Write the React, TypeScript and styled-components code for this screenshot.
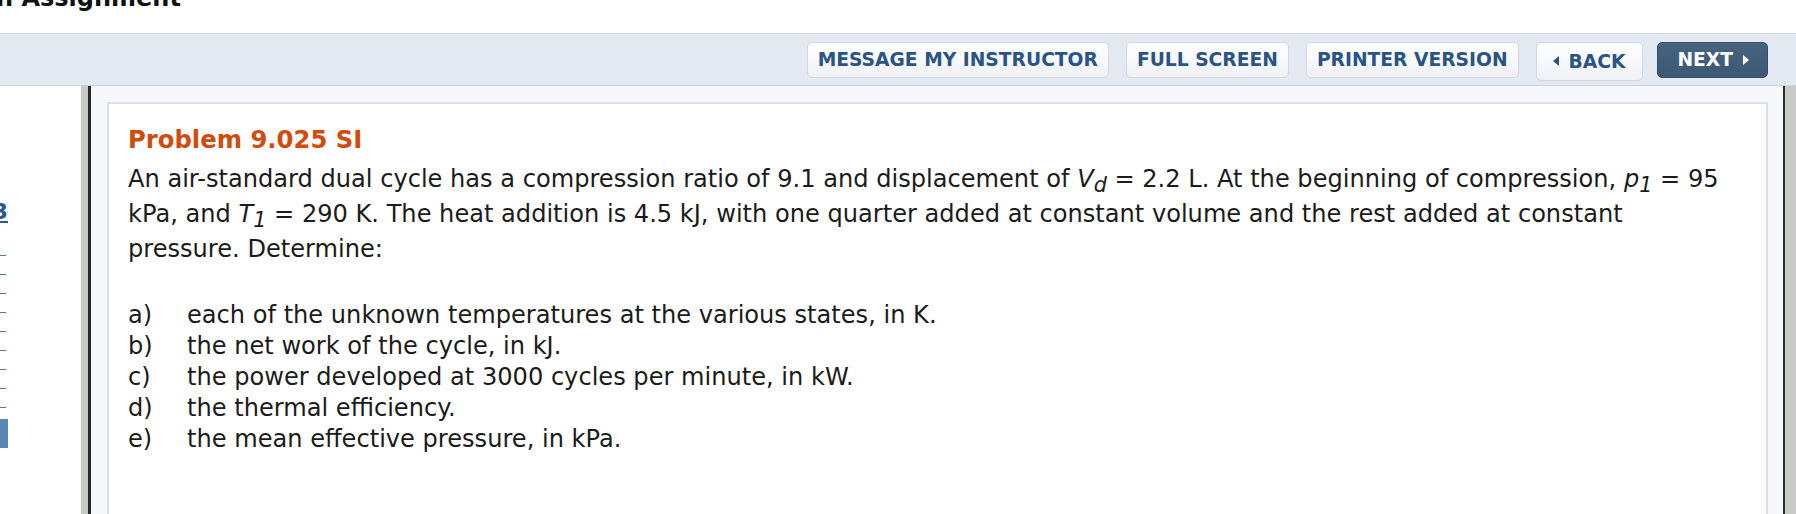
import * as React from "react";
import styled, { createGlobalStyle } from "styled-components";

const GlobalStyle = createGlobalStyle`
  html, body {
    margin: 0;
    padding: 0;
    background: #ffffff;
  }
  body {
    font-family: "DejaVu Sans", Verdana, sans-serif;
    color: #1b1b1b;
  }
`;

const Page = styled.div`
  height: 514px;
  overflow: hidden;
  display: flex;
  flex-direction: column;
`;

const HeadingStrip = styled.div`
  height: 33px;
  overflow: hidden;
  flex-shrink: 0;
`;

const PageTitle = styled.h1`
  margin: -14px 0 0 -4px;
  font-size: 24px;
  line-height: 24px;
  font-weight: bold;
  color: #111;
  white-space: nowrap;
`;

const Toolbar = styled.div`
  height: 51px;
  flex-shrink: 0;
  display: flex;
  align-items: center;
  justify-content: flex-end;
  gap: 17px;
  padding-right: 28px;
  background: #e4e8f0;
  border-top: 1px solid #d2d8e1;
  border-bottom: 1px solid #cbd3de;
`;

const ToolButton = styled.button<{
  $primary?: boolean;
  $tall?: boolean;
  $pad?: string;
}>`
  height: ${(p) => (p.$tall ? "39px" : "36px")};
  margin-top: ${(p) => (p.$tall ? "3px" : "0")};
  margin-left: ${(p) => (p.$primary ? "-3px" : "0")};
  padding: ${(p) => p.$pad ?? "0 10px"};
  display: flex;
  align-items: center;
  gap: 10px;
  font-family: "DejaVu Sans", Verdana, sans-serif;
  font-size: 18.7px;
  font-weight: bold;
  border-radius: 5px;
  cursor: pointer;
  color: ${(p) => (p.$primary ? "#ffffff" : "#2a5386")};
  background: ${(p) =>
    p.$primary
      ? "linear-gradient(#46637f, #3c5874)"
      : "linear-gradient(#ffffff, #eef1f6)"};
  border: 1px solid ${(p) => (p.$primary ? "#34506c" : "#d0d8e2")};
`;

const Arrow = styled.span<{ $dir: "left" | "right" }>`
  width: 0;
  height: 0;
  border-top: 5px solid transparent;
  border-bottom: 5px solid transparent;
  ${(p) =>
    p.$dir === "left"
      ? "border-right: 6px solid currentColor;"
      : "border-left: 6px solid currentColor;"}
`;

const Workspace = styled.div`
  flex: 1;
  display: flex;
  min-height: 0;
`;

const SideNav = styled.nav`
  width: 81px;
  flex-shrink: 0;
  overflow: hidden;
  display: flex;
  flex-direction: column;
  padding-top: 114px;
  box-sizing: border-box;
`;

const NavNumber = styled.a`
  display: block;
  width: 8px;
  overflow: hidden;
  font-size: 22px;
  font-weight: bold;
  line-height: 24px;
  color: #2b5a8a;
  text-decoration: underline;
  direction: rtl;
  white-space: nowrap;
  margin-bottom: 13px;
`;

const NavStub = styled.span`
  display: block;
  height: 19px;
  width: 6px;
  border-bottom: 1px solid #4d7bab;
  box-sizing: border-box;
`;

const NavActive = styled.span`
  display: block;
  margin-top: 11px;
  height: 29px;
  width: 8px;
  background: #5a86b3;
`;

const Splitter = styled.div<{ $side: "left" | "right" }>`
  flex-shrink: 0;
  background: #c9c9c9;
  width: ${(p) => (p.$side === "left" ? "7px" : "11px")};
  ${(p) =>
    p.$side === "left"
      ? "border-right: 3px solid #2a2a2a;"
      : "border-left: 2px solid #2a2a2a;"}
`;

const ContentArea = styled.main`
  flex: 1;
  background: #f5f7fa;
  padding: 16px 15px 0 16px;
  min-width: 0;
  display: flex;
`;

const ProblemPanel = styled.section`
  flex: 1;
  background: #ffffff;
  border: 2px solid #d8dfe8;
  border-bottom: none;
  padding: 21px 40px 0 19px;
`;

const ProblemTitle = styled.h2`
  margin: 0;
  font-size: 24.3px;
  line-height: 30px;
  font-weight: bold;
  color: #d04b0c;
`;

const Statement = styled.p`
  margin: 7px 0 0;
  font-size: 24.1px;
  line-height: 35px;
`;

const Sub = styled.sub`
  font-size: 0.86em;
  line-height: 0;
  vertical-align: -0.22em;
  font-style: italic;
`;

const PartList = styled.ol`
  list-style: none;
  margin: 33px 0 0;
  padding: 0;
  font-size: 24.1px;
  line-height: 31px;
`;

const Part = styled.li`
  display: grid;
  grid-template-columns: 59px 1fr;
`;

const parts = [
  ["a)", "each of the unknown temperatures at the various states, in K."],
  ["b)", "the net work of the cycle, in kJ."],
  ["c)", "the power developed at 3000 cycles per minute, in kW."],
  ["d)", "the thermal efficiency."],
  ["e)", "the mean effective pressure, in kPa."],
];

export default function App() {
  return (
    <Page>
      <GlobalStyle />
      <HeadingStrip>
        <PageTitle>n Assignment</PageTitle>
      </HeadingStrip>
      <Toolbar>
        <ToolButton>MESSAGE MY INSTRUCTOR</ToolButton>
        <ToolButton>FULL SCREEN</ToolButton>
        <ToolButton>PRINTER VERSION</ToolButton>
        <ToolButton $tall $pad="0 17px 0 16px">
          <Arrow $dir="left" />
          BACK
        </ToolButton>
        <ToolButton $primary $pad="0 18px 0 19px">
          NEXT
          <Arrow $dir="right" />
        </ToolButton>
      </Toolbar>
      <Workspace>
        <SideNav>
          <NavNumber href="#">3</NavNumber>
          {Array.from({ length: 9 }).map((_, i) => (
            <NavStub key={i} />
          ))}
          <NavActive />
        </SideNav>
        <Splitter $side="left" />
        <ContentArea>
          <ProblemPanel>
            <ProblemTitle>Problem 9.025 SI</ProblemTitle>
            <Statement>
              An air-standard dual cycle has a compression ratio of 9.1 and
              displacement of <i>V</i>
              <Sub>d</Sub> = 2.2 L. At the beginning of compression,{" "}
              <i>p</i>
              <Sub>1</Sub> = 95 kPa, and <i>T</i>
              <Sub>1</Sub> = 290 K. The heat addition is 4.5 kJ, with one
              quarter added at constant volume and the rest added at constant
              pressure. Determine:
            </Statement>
            <PartList>
              {parts.map(([label, text]) => (
                <Part key={label}>
                  <span>{label}</span>
                  <span>{text}</span>
                </Part>
              ))}
            </PartList>
          </ProblemPanel>
        </ContentArea>
        <Splitter $side="right" />
      </Workspace>
    </Page>
  );
}
